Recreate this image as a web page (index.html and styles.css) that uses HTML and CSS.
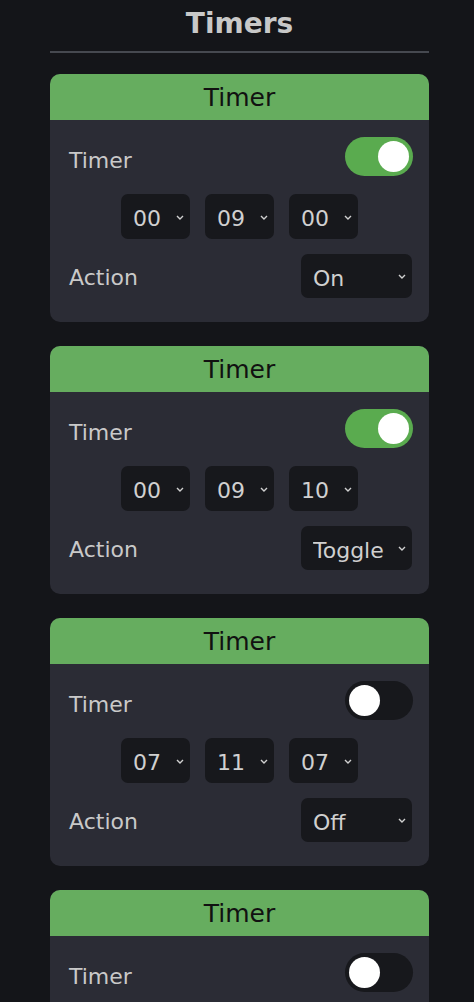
FILE: index.html
```html
<!DOCTYPE html>
<html lang="en">
<head>
  <meta charset="UTF-8">
  <title>Timers</title>
  <link rel="stylesheet" href="styles.css">
</head>
<body>
  <div class="page">
    <h1>Timers</h1>
    <hr class="rule">

    <div class="card">
      <div class="card-head">Timer</div>
      <div class="card-body">
        <div class="row">
          <span class="label">Timer</span>
          <label class="switch on"><input type="checkbox" checked><span class="knob"></span></label>
        </div>
        <div class="time-row">
          <div class="select small"><select><option>00</option></select><svg class="chev" viewBox="0 0 8 5"><path d="M1 1l3 3 3-3"/></svg></div>
          <div class="select small"><select><option>09</option></select><svg class="chev" viewBox="0 0 8 5"><path d="M1 1l3 3 3-3"/></svg></div>
          <div class="select small"><select><option>00</option></select><svg class="chev" viewBox="0 0 8 5"><path d="M1 1l3 3 3-3"/></svg></div>
        </div>
        <div class="row action">
          <span class="label">Action</span>
          <div class="select wide"><select><option>On</option><option>Off</option><option>Toggle</option></select><svg class="chev" viewBox="0 0 8 5"><path d="M1 1l3 3 3-3"/></svg></div>
        </div>
      </div>
    </div>

    <div class="card">
      <div class="card-head">Timer</div>
      <div class="card-body">
        <div class="row">
          <span class="label">Timer</span>
          <label class="switch on"><input type="checkbox" checked><span class="knob"></span></label>
        </div>
        <div class="time-row">
          <div class="select small"><select><option>00</option></select><svg class="chev" viewBox="0 0 8 5"><path d="M1 1l3 3 3-3"/></svg></div>
          <div class="select small"><select><option>09</option></select><svg class="chev" viewBox="0 0 8 5"><path d="M1 1l3 3 3-3"/></svg></div>
          <div class="select small"><select><option>10</option></select><svg class="chev" viewBox="0 0 8 5"><path d="M1 1l3 3 3-3"/></svg></div>
        </div>
        <div class="row action">
          <span class="label">Action</span>
          <div class="select wide"><select><option>Toggle</option><option>On</option><option>Off</option></select><svg class="chev" viewBox="0 0 8 5"><path d="M1 1l3 3 3-3"/></svg></div>
        </div>
      </div>
    </div>

    <div class="card">
      <div class="card-head">Timer</div>
      <div class="card-body">
        <div class="row">
          <span class="label">Timer</span>
          <label class="switch"><input type="checkbox"><span class="knob"></span></label>
        </div>
        <div class="time-row">
          <div class="select small"><select><option>07</option></select><svg class="chev" viewBox="0 0 8 5"><path d="M1 1l3 3 3-3"/></svg></div>
          <div class="select small"><select><option>11</option></select><svg class="chev" viewBox="0 0 8 5"><path d="M1 1l3 3 3-3"/></svg></div>
          <div class="select small"><select><option>07</option></select><svg class="chev" viewBox="0 0 8 5"><path d="M1 1l3 3 3-3"/></svg></div>
        </div>
        <div class="row action">
          <span class="label">Action</span>
          <div class="select wide"><select><option>Off</option><option>On</option><option>Toggle</option></select><svg class="chev" viewBox="0 0 8 5"><path d="M1 1l3 3 3-3"/></svg></div>
        </div>
      </div>
    </div>

    <div class="card">
      <div class="card-head">Timer</div>
      <div class="card-body">
        <div class="row">
          <span class="label">Timer</span>
          <label class="switch"><input type="checkbox"><span class="knob"></span></label>
        </div>
        <div class="time-row">
          <div class="select small"><select><option>00</option></select><svg class="chev" viewBox="0 0 8 5"><path d="M1 1l3 3 3-3"/></svg></div>
          <div class="select small"><select><option>00</option></select><svg class="chev" viewBox="0 0 8 5"><path d="M1 1l3 3 3-3"/></svg></div>
          <div class="select small"><select><option>00</option></select><svg class="chev" viewBox="0 0 8 5"><path d="M1 1l3 3 3-3"/></svg></div>
        </div>
        <div class="row action">
          <span class="label">Action</span>
          <div class="select wide"><select><option>On</option></select><svg class="chev" viewBox="0 0 8 5"><path d="M1 1l3 3 3-3"/></svg></div>
        </div>
      </div>
    </div>
  </div>

  <script>
    // flip the switch look when clicked
    document.querySelectorAll('.switch input').forEach(function (box) {
      box.addEventListener('change', function () {
        box.parentNode.classList.toggle('on', box.checked);
      });
    });
  </script>
</body>
</html>
```

FILE: styles.css
```css
body {
  margin: 0;
  background-color: #141519;
  font-family: "DejaVu Sans", Verdana, sans-serif;
  color: #c9c9c9;
}

.page {
  width: 379px;
  margin-left: 50px;
}

h1 {
  margin: 0;
  padding-top: 7px;
  font-size: 28px;
  line-height: 33px;
  text-align: center;
  color: #c8c8c8;
}

.rule {
  margin: 11px 0 21px;
  border: none;
  border-top: 2px solid #464950;
}

.card {
  background-color: #2b2c35;
  border-radius: 10px;
  overflow: hidden;
  margin-bottom: 24px;
}

.card-head {
  background-color: #66ad5f;
  color: #111;
  text-align: center;
  font-size: 25px;
  height: 45px;
  padding-top: 1px;
  line-height: 46px;
}

.card-body {
  padding: 17px 16px 24px 19px;
}

.row {
  display: flex;
  align-items: center;
  justify-content: space-between;
}

.label {
  font-size: 22px;
  padding-top: 8px;
}

.action .label {
  padding-top: 2px;
}

.switch {
  display: flex;
  align-items: center;
  justify-content: flex-start;
  width: 68px;
  height: 39px;
  padding: 0 4px;
  box-sizing: border-box;
  border-radius: 20px;
  background-color: #17181c;
  cursor: pointer;
}

.switch.on {
  justify-content: flex-end;
  background-color: #5aab4f;
}

.switch input {
  display: none;
}

.knob {
  width: 31px;
  height: 31px;
  border-radius: 50%;
  background-color: #fff;
}

.time-row {
  display: flex;
  justify-content: center;
  gap: 15px;
  margin: 18px 0 15px;
  padding-right: 3px;
}

.select {
  position: relative;
  height: 45px;
}

.select.small {
  width: 69px;
}

.select.wide {
  width: 111px;
  height: 44px;
  margin-right: 1px;
}

.select select {
  appearance: none;
  -webkit-appearance: none;
  width: 100%;
  height: 100%;
  border: none;
  border-radius: 7px;
  background-color: #17181c;
  color: #d0d0d0;
  font-family: "DejaVu Sans", Verdana, sans-serif;
  font-size: 22px;
  padding: 4px 0 0 12px;
  outline: none;
}

.chev {
  position: absolute;
  right: 6px;
  top: 50%;
  width: 8px;
  height: 5px;
  margin-top: -2px;
  fill: none;
  stroke: #d0d0d0;
  stroke-width: 1.4;
  pointer-events: none;
}
```
